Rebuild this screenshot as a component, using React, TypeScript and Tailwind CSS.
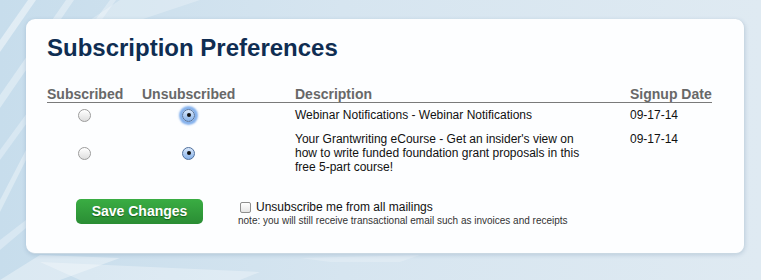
import type { ReactNode } from 'react';

interface Subscription {
  id: number;
  description: string;
  signup: string;
  subscribed: boolean;
  focused?: boolean;
}

const SUBSCRIPTIONS: Subscription[] = [
  {
    id: 1,
    description: 'Webinar Notifications - Webinar Notifications',
    signup: '09-17-14',
    subscribed: false,
    focused: true,
  },
  {
    id: 2,
    description:
      "Your Grantwriting eCourse - Get an insider's view on how to write funded foundation grant proposals in this free 5-part course!",
    signup: '09-17-14',
    subscribed: false,
  },
];

function Radio({ checked, focused }: { checked: boolean; focused?: boolean }) {
  if (!checked) {
    return (
      <span className="block h-[13px] w-[13px] rounded-full border border-[#9c9c9c] bg-gradient-to-b from-[#ffffff] to-[#dedede] shadow-[inset_0_1px_1px_rgba(255,255,255,0.9)]" />
    );
  }
  return (
    <span
      className={`flex h-[13px] w-[13px] items-center justify-center rounded-full border border-[#4f6f9c] bg-gradient-to-b from-[#dbe9fb] to-[#86b1e8] ${
        focused ? 'shadow-[0_0_2px_3px_rgba(90,150,230,0.75)]' : ''
      }`}
    >
      <span className="block h-[4px] w-[4px] rounded-full bg-[#111]" />
    </span>
  );
}

function Backdrop() {
  return (
    <svg className="absolute inset-0" width="761" height="280" viewBox="0 0 761 280">
      <defs>
        <linearGradient id="bg" x1="0" y1="0" x2="1" y2="0">
          <stop offset="0" stopColor="#c7ddec" />
          <stop offset="0.45" stopColor="#d6e5f0" />
          <stop offset="1" stopColor="#dfeaf2" />
        </linearGradient>
      </defs>
      <rect width="761" height="280" fill="url(#bg)" />
      <g fill="#ffffff">
        <polygon points="0,40 28,0 36,0 0,52" opacity="0.45" />
        <polygon points="0,95 66,0 74,0 0,108" opacity="0.35" />
        <polygon points="0,150 110,0 116,0 0,160" opacity="0.3" />
        <polygon points="60,40 120,0 200,0 80,40" opacity="0.25" />
        <polygon points="0,200 26,150 26,160 0,212" opacity="0.35" />
        <polygon points="0,240 26,220 26,228 0,250" opacity="0.3" />
        <polygon points="0,280 40,255 120,258 60,280" opacity="0.35" />
        <polygon points="40,262 260,272 240,280 80,280" opacity="0.3" />
        <polygon points="300,258 420,255 400,262 330,262" opacity="0.2" />
      </g>
    </svg>
  );
}

function HeaderCell({ children }: { children: ReactNode }) {
  return <div className="text-[14px] font-bold leading-[16px] text-[#686868]">{children}</div>;
}

export default function App() {
  return (
    <div className="relative h-[280px] w-[761px] overflow-hidden font-['Liberation_Sans',Arial,sans-serif]">
      <Backdrop />
      <div className="relative pl-[26px] pt-[19px]">
        <div className="h-[235px] w-[719px] rounded-[9px] border-b border-r border-[#c9d8e3] bg-[#fdfeff] pl-[21px] pt-[15px] shadow-[0_1px_4px_rgba(40,80,120,0.18)]">
          <h1 className="text-[24px] font-bold leading-[28px] text-[#0f2d52]">
            Subscription Preferences
          </h1>

          <div className="mt-[24px] w-[665px]">
            <div className="grid grid-cols-[95px_153px_335px_82px] border-b border-[#7a7a7a]">
              <HeaderCell>Subscribed</HeaderCell>
              <HeaderCell>Unsubscribed</HeaderCell>
              <HeaderCell>Description</HeaderCell>
              <HeaderCell>Signup Date</HeaderCell>
            </div>
            {SUBSCRIPTIONS.map((sub) => (
              <div
                key={sub.id}
                className="grid grid-cols-[95px_153px_335px_82px] py-[5px] text-[12px] leading-[14px] text-[#111]"
              >
                <div className="flex w-[75px] items-center justify-center">
                  <Radio checked={sub.subscribed} />
                </div>
                <div className="flex w-[93px] items-center justify-center">
                  <Radio checked={!sub.subscribed} focused={sub.focused} />
                </div>
                <div className="w-[300px]">{sub.description}</div>
                <div>{sub.signup}</div>
              </div>
            ))}
          </div>

          <div className="ml-[29px] mt-[20px] flex items-start">
            <button className="h-[25px] w-[127px] rounded-[5px] bg-gradient-to-b from-[#3aad43] to-[#2a8d34] text-[14px] font-bold text-white [text-shadow:0_1px_1px_rgba(0,60,0,0.6)]">
              Save Changes
            </button>
            <div className="ml-[35px] mt-[1px]">
              <label className="flex items-center text-[12px] leading-[14px] text-[#111]">
                <span className="ml-[2px] mr-[5px] block h-[11px] w-[11px] rounded-[2px] border border-[#8e8e8e] bg-gradient-to-b from-[#ffffff] to-[#e6e6e6]" />
                Unsubscribe me from all mailings
              </label>
              <div className="mt-[1px] text-[10px] leading-[12px] text-[#333]">
                note: you will still receive transactional email such as invoices and receipts
              </div>
            </div>
          </div>
        </div>
      </div>
    </div>
  );
}
